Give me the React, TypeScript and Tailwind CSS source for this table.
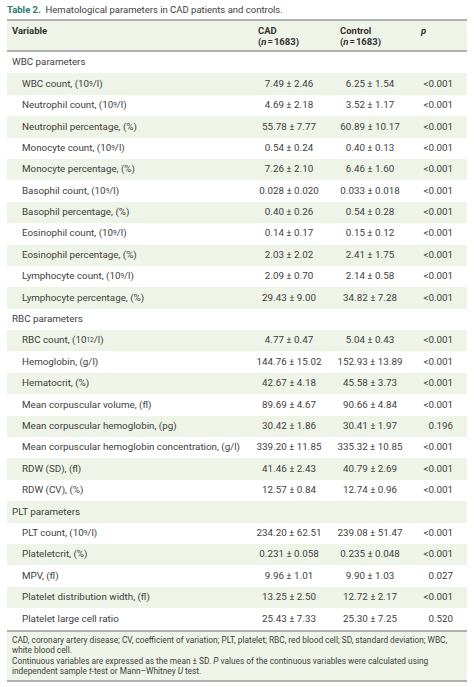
type Row =
  | { kind: "section"; label: string }
  | { kind: "data"; label: React.ReactNode; cad: string; ctrl: string; p: string };

const e9 = <sup className="text-[6.5px] relative -top-[1px]">9</sup>;
const e12 = <sup className="text-[6.5px] relative -top-[1px]">12</sup>;
const lt = "<0.001";

const rows: Row[] = [
  { kind: "section", label: "WBC parameters" },
  { kind: "data", label: <>WBC count, (10{e9}/l)</>, cad: "7.49 ± 2.46", ctrl: "6.25 ± 1.54", p: lt },
  { kind: "data", label: <>Neutrophil count, (10{e9}/l)</>, cad: "4.69 ± 2.18", ctrl: "3.52 ± 1.17", p: lt },
  { kind: "data", label: "Neutrophil percentage, (%)", cad: "55.78 ± 7.77", ctrl: "60.89 ± 10.17", p: lt },
  { kind: "data", label: <>Monocyte count, (10{e9}/l)</>, cad: "0.54 ± 0.24", ctrl: "0.40 ± 0.13", p: lt },
  { kind: "data", label: "Monocyte percentage, (%)", cad: "7.26 ± 2.10", ctrl: "6.46 ± 1.60", p: lt },
  { kind: "data", label: <>Basophil count, (10{e9}/l)</>, cad: "0.028 ± 0.020", ctrl: "0.033 ± 0.018", p: lt },
  { kind: "data", label: "Basophil percentage, (%)", cad: "0.40 ± 0.26", ctrl: "0.54 ± 0.28", p: lt },
  { kind: "data", label: <>Eosinophil count, (10{e9}/l)</>, cad: "0.14 ± 0.17", ctrl: "0.15 ± 0.12", p: lt },
  { kind: "data", label: "Eosinophil percentage, (%)", cad: "2.03 ± 2.02", ctrl: "2.41 ± 1.75", p: lt },
  { kind: "data", label: <>Lymphocyte count, (10{e9}/l)</>, cad: "2.09 ± 0.70", ctrl: "2.14 ± 0.58", p: lt },
  { kind: "data", label: "Lymphocyte percentage, (%)", cad: "29.43 ± 9.00", ctrl: "34.82 ± 7.28", p: lt },
  { kind: "section", label: "RBC parameters" },
  { kind: "data", label: <>RBC count, (10{e12}/l)</>, cad: "4.77 ± 0.47", ctrl: "5.04 ± 0.43", p: lt },
  { kind: "data", label: "Hemoglobin, (g/l)", cad: "144.76 ± 15.02", ctrl: "152.93 ± 13.89", p: lt },
  { kind: "data", label: "Hematocrit, (%)", cad: "42.67 ± 4.18", ctrl: "45.58 ± 3.73", p: lt },
  { kind: "data", label: "Mean corpuscular volume, (fl)", cad: "89.69 ± 4.67", ctrl: "90.66 ± 4.84", p: lt },
  { kind: "data", label: "Mean corpuscular hemoglobin, (pg)", cad: "30.42 ± 1.86", ctrl: "30.41 ± 1.97", p: "0.196" },
  { kind: "data", label: "Mean corpuscular hemoglobin concentration, (g/l)", cad: "339.20 ± 11.85", ctrl: "335.32 ± 10.85", p: lt },
  { kind: "data", label: "RDW (SD), (fl)", cad: "41.46 ± 2.43", ctrl: "40.79 ± 2.69", p: lt },
  { kind: "data", label: "RDW (CV), (%)", cad: "12.57 ± 0.84", ctrl: "12.74 ± 0.96", p: lt },
  { kind: "section", label: "PLT parameters" },
  { kind: "data", label: <>PLT count, (10{e9}/l)</>, cad: "234.20 ± 62.51", ctrl: "239.08 ± 51.47", p: lt },
  { kind: "data", label: "Plateletcrit, (%)", cad: "0.231 ± 0.058", ctrl: "0.235 ± 0.048", p: lt },
  { kind: "data", label: "MPV, (fl)", cad: "9.96 ± 1.01", ctrl: "9.90 ± 1.03", p: "0.027" },
  { kind: "data", label: "Platelet distribution width, (fl)", cad: "13.25 ± 2.50", ctrl: "12.72 ± 2.17", p: lt },
  { kind: "data", label: "Platelet large cell ratio", cad: "25.43 ± 7.33", ctrl: "25.30 ± 7.25", p: "0.520" },
];

const cols = "grid grid-cols-[243px_80px_82px_54px]";

export default function App() {
  return (
    <div className="w-[474px] h-[687px] bg-white text-[#404040] font-['Roboto',sans-serif] pt-[3px] px-[7px]">
      <p className="text-[9.5px] leading-[13px] mb-[3px]">
        <span className="font-bold text-[#2c7a72]">Table 2.</span>&nbsp; Hematological parameters in CAD patients and controls.
      </p>

      <div className="border-t-2 border-[#b0b0b0] bg-[#eef4e8]">
        <div className={`${cols} h-[29px] items-center text-[9.5px] leading-[11px] font-bold text-[#333]`}>
          <div className="pl-[5px] self-start pt-[4px]">Variable</div>
          <div className="pl-[8px]">
            CAD
            <br />
            (<i>n</i>&#8202;=&#8202;1683)
          </div>
          <div className="pl-[10px]">
            Control
            <br />
            (<i>n</i>&#8202;=&#8202;1683)
          </div>
          <div className="pl-[9px] self-start pt-[4px]">
            <i>p</i>
          </div>
        </div>
      </div>

      <div className="border-t-2 border-[#b0b0b0] border-b-2">
        {rows.map((r, i) => (
          <div
            key={i}
            className={`${cols} h-[21.4px] items-center text-[9.8px] ${i % 2 === 1 ? "bg-[#eef4e8]" : "bg-white"}`}
          >
            {r.kind === "section" ? (
              <div className="pl-[5px] col-span-4">{r.label}</div>
            ) : (
              <>
                <div className="pl-[15px] whitespace-nowrap">{r.label}</div>
                <div className="text-center pr-[2px] whitespace-nowrap">{r.cad}</div>
                <div className="text-center pr-[2px] whitespace-nowrap">{r.ctrl}</div>
                <div className="text-right pr-[13px]">{r.p}</div>
              </>
            )}
          </div>
        ))}
      </div>

      <div className="bg-[#eef4e8] border-b-2 border-[#b0b0b0] px-[5px] pt-[3px] pb-[3px] text-[8.3px] leading-[10.5px]">
        <p>
          CAD, coronary artery disease; CV, coefficient of variation; PLT, platelet; RBC, red blood cell; SD, standard deviation; WBC,
          white blood cell.
        </p>
        <p>
          Continuous variables are expressed as the mean ± SD. <i>P</i> values of the continuous variables were calculated using
          independent sample <i>t</i>-test or Mann–Whitney <i>U</i> test.
        </p>
      </div>
    </div>
  );
}
